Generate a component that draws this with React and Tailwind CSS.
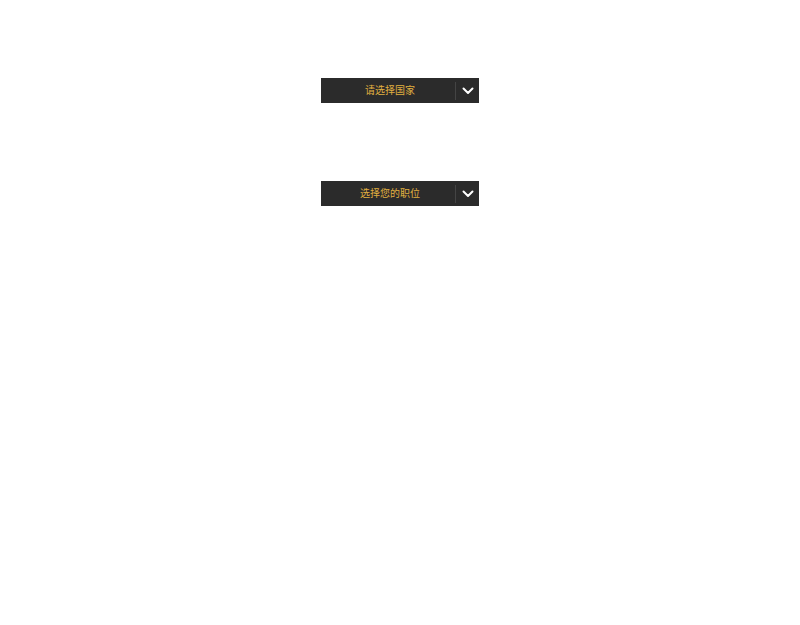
import React from 'react';

const Select = ({ label }) => (
    <div className="flex items-center w-[158px] h-[25px] bg-[#2b2b2b]">
        <div className="flex-1 flex items-center justify-center text-[10px] leading-none text-[#e0b040] pl-1 pb-[2px]" style={{ fontFamily: '"Noto Sans CJK SC", sans-serif' }}>
            {label}
        </div>
        <div className="w-px h-[18px] bg-[#444444]" />
        <div className="w-[23px] flex items-center justify-center">
            <svg width="12" height="8" viewBox="0 0 12 8" fill="none">
                <path d="M1.5 1.5 L6 6 L10.5 1.5" stroke="#ffffff" strokeWidth="2" strokeLinecap="round" strokeLinejoin="round" />
            </svg>
        </div>
    </div>
);

export default function App() {
    return (
        <div className="w-[800px] h-[625px] bg-white flex flex-col items-center pt-[78px] gap-[78px]">
            <Select label="请选择国家" />
            <Select label="选择您的职位" />
        </div>
    );
}
